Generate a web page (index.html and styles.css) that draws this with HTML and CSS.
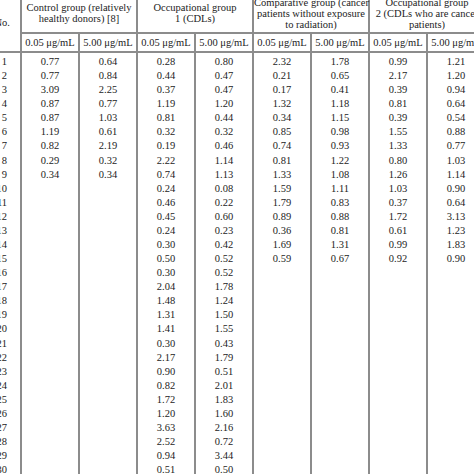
FILE: index.html
```html
<!DOCTYPE html>
<html>
<head>
<meta charset="utf-8">
<link rel="stylesheet" href="styles.css">
</head>
<body>
<table class="tbl">
<colgroup>
<col class="c-no"><col class="c"><col class="c"><col class="c"><col class="c"><col class="c"><col class="c"><col class="c"><col class="c">
</colgroup>
<thead>
<tr class="grp">
<th rowspan="2" class="no-h">No.</th>
<th colspan="2">Control group (relatively<br>healthy donors) [8]</th>
<th colspan="2">Occupational group<br>1 (CDLs)</th>
<th colspan="2">Comparative group (cancer<br>patients without exposure<br>to radiation)</th>
<th colspan="2">Occupational group<br>2 (CDLs who are cancer<br>patients)</th>
</tr>
<tr class="sub">
<th>0.05 μg/mL</th><th>5.00 μg/mL</th><th>0.05 μg/mL</th><th>5.00 μg/mL</th><th>0.05 μg/mL</th><th>5.00 μg/mL</th><th>0.05 μg/mL</th><th>5.00 μg/mL</th>
</tr>
</thead>
<tbody>
<tr class="first"><td class="no">1</td><td>0.77</td><td>0.64</td><td>0.28</td><td>0.80</td><td>2.32</td><td>1.78</td><td>0.99</td><td>1.21</td></tr>
<tr><td class="no">2</td><td>0.77</td><td>0.84</td><td>0.44</td><td>0.47</td><td>0.21</td><td>0.65</td><td>2.17</td><td>1.20</td></tr>
<tr><td class="no">3</td><td>3.09</td><td>2.25</td><td>0.37</td><td>0.47</td><td>0.17</td><td>0.41</td><td>0.39</td><td>0.94</td></tr>
<tr><td class="no">4</td><td>0.87</td><td>0.77</td><td>1.19</td><td>1.20</td><td>1.32</td><td>1.18</td><td>0.81</td><td>0.64</td></tr>
<tr><td class="no">5</td><td>0.87</td><td>1.03</td><td>0.81</td><td>0.44</td><td>0.34</td><td>1.15</td><td>0.39</td><td>0.54</td></tr>
<tr><td class="no">6</td><td>1.19</td><td>0.61</td><td>0.32</td><td>0.32</td><td>0.85</td><td>0.98</td><td>1.55</td><td>0.88</td></tr>
<tr><td class="no">7</td><td>0.82</td><td>2.19</td><td>0.19</td><td>0.46</td><td>0.74</td><td>0.93</td><td>1.33</td><td>0.77</td></tr>
<tr><td class="no">8</td><td>0.29</td><td>0.32</td><td>2.22</td><td>1.14</td><td>0.81</td><td>1.22</td><td>0.80</td><td>1.03</td></tr>
<tr><td class="no">9</td><td>0.34</td><td>0.34</td><td>0.74</td><td>1.13</td><td>1.33</td><td>1.08</td><td>1.26</td><td>1.14</td></tr>
<tr><td class="no">10</td><td></td><td></td><td>0.24</td><td>0.08</td><td>1.59</td><td>1.11</td><td>1.03</td><td>0.90</td></tr>
<tr><td class="no">11</td><td></td><td></td><td>0.46</td><td>0.22</td><td>1.79</td><td>0.83</td><td>0.37</td><td>0.64</td></tr>
<tr><td class="no">12</td><td></td><td></td><td>0.45</td><td>0.60</td><td>0.89</td><td>0.88</td><td>1.72</td><td>3.13</td></tr>
<tr><td class="no">13</td><td></td><td></td><td>0.24</td><td>0.23</td><td>0.36</td><td>0.81</td><td>0.61</td><td>1.23</td></tr>
<tr><td class="no">14</td><td></td><td></td><td>0.30</td><td>0.42</td><td>1.69</td><td>1.31</td><td>0.99</td><td>1.83</td></tr>
<tr><td class="no">15</td><td></td><td></td><td>0.50</td><td>0.52</td><td>0.59</td><td>0.67</td><td>0.92</td><td>0.90</td></tr>
<tr><td class="no">16</td><td></td><td></td><td>0.30</td><td>0.52</td><td></td><td></td><td></td><td></td></tr>
<tr><td class="no">17</td><td></td><td></td><td>2.04</td><td>1.78</td><td></td><td></td><td></td><td></td></tr>
<tr><td class="no">18</td><td></td><td></td><td>1.48</td><td>1.24</td><td></td><td></td><td></td><td></td></tr>
<tr><td class="no">19</td><td></td><td></td><td>1.31</td><td>1.50</td><td></td><td></td><td></td><td></td></tr>
<tr><td class="no">20</td><td></td><td></td><td>1.41</td><td>1.55</td><td></td><td></td><td></td><td></td></tr>
<tr><td class="no">21</td><td></td><td></td><td>0.30</td><td>0.43</td><td></td><td></td><td></td><td></td></tr>
<tr><td class="no">22</td><td></td><td></td><td>2.17</td><td>1.79</td><td></td><td></td><td></td><td></td></tr>
<tr><td class="no">23</td><td></td><td></td><td>0.90</td><td>0.51</td><td></td><td></td><td></td><td></td></tr>
<tr><td class="no">24</td><td></td><td></td><td>0.82</td><td>2.01</td><td></td><td></td><td></td><td></td></tr>
<tr><td class="no">25</td><td></td><td></td><td>1.72</td><td>1.83</td><td></td><td></td><td></td><td></td></tr>
<tr><td class="no">26</td><td></td><td></td><td>1.20</td><td>1.60</td><td></td><td></td><td></td><td></td></tr>
<tr><td class="no">27</td><td></td><td></td><td>3.63</td><td>2.16</td><td></td><td></td><td></td><td></td></tr>
<tr><td class="no">28</td><td></td><td></td><td>2.52</td><td>0.72</td><td></td><td></td><td></td><td></td></tr>
<tr><td class="no">29</td><td></td><td></td><td>0.94</td><td>3.44</td><td></td><td></td><td></td><td></td></tr>
<tr><td class="no">30</td><td></td><td></td><td>0.51</td><td>0.50</td><td></td><td></td><td></td><td></td></tr>
<tr><td class="no">31</td><td></td><td></td><td>0.62</td><td>0.58</td><td></td><td></td><td></td><td></td></tr>
</tbody>
</table>
</body>
</html>
```

FILE: styles.css
```css
html, body {
  margin: 0;
  padding: 0;
  overflow: hidden;
  background: #ffffff;
}

.tbl {
  border-collapse: collapse;
  table-layout: fixed;
  width: 505px;
  margin-left: -20px;
  margin-top: -6px;
  font-family: "Liberation Serif", "Times New Roman", serif;
  font-size: 10.5px;
  color: #1c1c1c;
}

.c-no { width: 41px; }
.c { width: 58px; }

.tbl th {
  font-weight: normal;
  padding: 0;
  border: 2px solid #8c8c8c;
  text-align: center;
  vertical-align: middle;
}

.grp th {
  height: 38px;
  line-height: 11px;
  border-top: none;
  white-space: nowrap;
}

.sub th {
  height: 17px;
  line-height: 17px;
  white-space: nowrap;
}

.tbl th.no-h {
  text-align: right;
  padding-right: 10px;
  border-left: none;
  border-top: none;
}

.tbl td {
  padding: 0;
  height: 14.08px;
  line-height: 14.08px;
  text-align: center;
  border-left: 2px solid #8c8c8c;
  border-right: 2px solid #8c8c8c;
  white-space: nowrap;
}

.first td {
  padding-top: 2px;
}

.tbl td.no {
  text-align: right;
  padding-right: 13px;
  border-left: none;
}
```
